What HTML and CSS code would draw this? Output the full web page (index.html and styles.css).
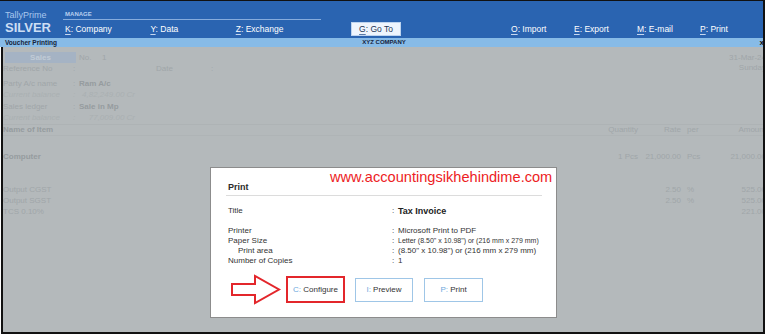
FILE: index.html
```html
<!DOCTYPE html>
<html>
<head>
<meta charset="utf-8">
<title>TallyPrime - Voucher Printing</title>
<link rel="stylesheet" href="styles.css">
</head>
<body>
<div class="app">
  <header class="topbar">
    <div class="brand">
      <div class="brand-name">TallyPrime</div>
      <div class="brand-ed">SILVER</div>
    </div>
    <div class="manage">
      <div class="manage-label">MANAGE</div>
      <div class="manage-items">
        <span class="mi"><span class="key">K</span>: Company</span>
        <span class="mi"><span class="key">Y</span>: Data</span>
        <span class="mi"><span class="key">Z</span>: Exchange</span>
      </div>
    </div>
    <div class="goto"><span class="key">G</span>: Go To</div>
    <div class="right-items">
      <span class="ri"><span class="key">O</span>: Import</span>
      <span class="ri"><span class="key">E</span>: Export</span>
      <span class="ri"><span class="key">M</span>: E-mail</span>
      <span class="ri"><span class="key">P</span>: Print</span>
    </div>
  </header>
  <div class="subbar">
    <span class="sb-left">Voucher Printing</span>
    <span class="sb-center">XYZ COMPANY</span>
    <span class="sb-close">x</span>
  </div>
  <main class="body">
    <div class="sheet">
      <div class="voucher-top">
        <div class="vt-left">
          <div class="row r-sales">
            <span class="sales-tag">Sales</span>
            <span class="no">No.</span>
            <span>1</span>
          </div>
          <div class="row r-ref">
            <span class="lbl">Reference No</span><span class="colon">:</span>
            <span class="ref-gap"></span>
            <span class="date-lbl">Date</span><span class="colon">:</span>
          </div>
          <div class="row r-party">
            <span class="lbl">Party A/c name</span><span class="colon">:</span>
            <span class="bold">Ram A/c</span>
          </div>
          <div class="row r-bal ital">
            <span class="lbl">Current balance</span><span class="colon">:</span>
            <span class="bal">4,82,249.00 Cr</span>
          </div>
          <div class="row r-ledger">
            <span class="lbl">Sales ledger</span><span class="colon">:</span>
            <span class="bold">Sale in Mp</span>
          </div>
          <div class="row r-bal ital">
            <span class="lbl">Current balance</span><span class="colon">:</span>
            <span class="bal">77,009.00 Cr</span>
          </div>
        </div>
        <div class="vt-right">
          <div>31-Mar-24</div>
          <div>Sunday</div>
        </div>
      </div>
      <div class="items-head">
        <span class="bold">Name of Item</span>
        <span class="num">Quantity</span>
        <span class="num">Rate</span>
        <span></span>
        <span>per</span>
        <span class="num">Amount</span>
      </div>
      <div class="item-row r-computer">
        <span class="bold">Computer</span>
        <span class="num">1 Pcs</span>
        <span class="num">21,000.00</span>
        <span></span>
        <span>Pcs</span>
        <span class="num">21,000.00</span>
      </div>
      <div class="item-row tax r-first-tax">
        <span>Output CGST</span>
        <span></span>
        <span class="num">2.50</span>
        <span></span>
        <span>%</span>
        <span class="num">525.00</span>
      </div>
      <div class="item-row tax">
        <span>Output SGST</span>
        <span></span>
        <span class="num">2.50</span>
        <span></span>
        <span>%</span>
        <span class="num">525.00</span>
      </div>
      <div class="item-row tax">
        <span>TCS 0.10%</span>
        <span></span>
        <span></span>
        <span></span>
        <span></span>
        <span class="num">221.00</span>
      </div>
    </div>
  </main>

  <div class="dialog">
    <div class="watermark">www.accountingsikhehindime.com</div>
    <div class="dlg-head">Print</div>
    <div class="kv kv-title">
      <span>Title</span><span>:</span><span class="strong">Tax Invoice</span>
    </div>
    <div class="kv kv-first">
      <span>Printer</span><span>:</span><span>Microsoft Print to PDF</span>
    </div>
    <div class="kv">
      <span>Paper Size</span><span>:</span><span class="small">Letter (8.50" x 10.98") or (216 mm x 279 mm)</span>
    </div>
    <div class="kv">
      <span class="indent">Print area</span><span>:</span><span>(8.50" x 10.98") or (216 mm x 279 mm)</span>
    </div>
    <div class="kv">
      <span>Number of Copies</span><span>:</span><span>1</span>
    </div>
    <div class="btns">
      <svg class="arrow" width="52" height="31" viewBox="0 0 52 31">
        <polygon points="2,10 25,10 25,2 49,15.5 25,29 25,21 2,21" fill="#ffffff" stroke="#e3262b" stroke-width="2" stroke-linejoin="miter"/>
      </svg>
      <div class="btn btn-config"><span class="bkey">C:</span>&nbsp;Configure</div>
      <div class="btn btn-preview"><span class="bkey">I:</span>&nbsp;Preview</div>
      <div class="btn btn-print"><span class="bkey">P:</span>&nbsp;Print</div>
    </div>
  </div>
</div>
</body>
</html>
```

FILE: styles.css
```css
* {
  box-sizing: border-box;
  margin: 0;
  padding: 0;
}

body {
  margin: 0;
  width: 768px;
  height: 336px;
  overflow: hidden;
  background: #ffffff;
  font-family: "Liberation Sans", Arial, sans-serif;
}

.app {
  position: relative;
  width: 765px;
  height: 334px;
  border-top: 1px solid #111111;
  border-right: 2px solid #111111;
  display: flex;
  flex-direction: column;
}

/* ---------- top bar ---------- */
.topbar {
  height: 37px;
  flex: none;
  background: #2a64b1;
  display: flex;
  padding-left: 5px;
  color: #ffffff;
}

.brand {
  width: 63px;
  padding-top: 9px;
}

.brand-name {
  font-size: 9px;
  line-height: 10px;
  color: #a9c7ee;
}

.brand-ed {
  font-size: 13px;
  line-height: 15px;
  font-weight: bold;
  color: #cddef4;
}

.manage {
  width: 258px;
  padding-top: 10px;
}

.manage-label {
  font-size: 6px;
  line-height: 7px;
  font-weight: bold;
  color: #b9d0ef;
  padding-left: 2px;
  padding-bottom: 1px;
  border-bottom: 1px solid #86acdd;
}

.manage-items {
  display: flex;
  margin-top: 4px;
  padding-left: 2px;
}

.mi {
  width: 86px;
  font-size: 8.5px;
  line-height: 10px;
  white-space: nowrap;
}

.key {
  text-decoration: underline;
  text-underline-offset: 2px;
  text-decoration-color: #c6d8f0;
}

.goto {
  align-self: flex-start;
  margin-left: 30px;
  margin-top: 21px;
  width: 54px;
  height: 14px;
  background: #eef5fd;
  border: 1px solid #bdd4ef;
  color: #1f3556;
  font-size: 8.5px;
  line-height: 12px;
  text-align: center;
  white-space: nowrap;
}

.goto .key {
  text-decoration-color: #5a7aa6;
}

.right-items {
  display: flex;
  margin-left: 110px;
  padding-top: 23px;
}

.ri {
  width: 63px;
  font-size: 8.5px;
  line-height: 10px;
  white-space: nowrap;
}

/* ---------- sub bar ---------- */
.subbar {
  height: 9px;
  flex: none;
  background: #87bbe7;
  display: grid;
  grid-template-columns: 1fr auto 1fr;
  padding-left: 5px;
  font-size: 6.5px;
  line-height: 9px;
  font-weight: bold;
  color: #15233a;
}

.sb-center {
  font-size: 6px;
}

.sb-close {
  justify-self: end;
  font-size: 8px;
  margin-right: -1px;
  color: #111111;
}

/* ---------- dimmed voucher ---------- */
.body {
  flex: 1;
  margin-left: 1px;
  border-left: 2px solid #111111;
  border-bottom: 2px solid #111111;
  background: #b4b9bb;
  overflow: hidden;
}

.sheet {
  width: 763px;
  font-size: 8px;
  line-height: 10px;
  color: #a0a6a9;
  white-space: nowrap;
}

.bold {
  font-weight: bold;
  color: #969c9f;
}

.voucher-top {
  display: flex;
}

.vt-left {
  flex: 1;
}

.vt-right {
  text-align: right;
  padding-top: 6px;
  line-height: 10px;
}

.row {
  display: flex;
  height: 10px;
}

.r-sales {
  margin-top: 5px;
  height: 11px;
  align-items: center;
}

.sales-tag {
  margin-left: 2px;
  width: 71px;
  height: 11px;
  line-height: 11px;
  background: #a5b3c4;
  color: #c1cbd6;
  font-weight: bold;
  text-align: center;
}

.no {
  margin-left: 3px;
  width: 23px;
}

.r-ref {
  margin-top: 1px;
}

.lbl {
  width: 70px;
}

.colon {
  width: 6px;
}

.ref-gap {
  width: 77px;
}

.date-lbl {
  width: 55px;
}

.r-party {
  margin-top: 5px;
}

.r-bal {
  margin-top: 1px;
}

.r-ledger {
  margin-top: 2px;
}

.ital {
  font-style: italic;
  color: #aab0b2;
}

.bal {
  width: 56px;
  text-align: right;
}

.items-head,
.item-row {
  display: grid;
  grid-template-columns: 595px 40px 43px 6px 30px 49px;
  height: 10px;
}

.items-head {
  margin-top: 1px;
  height: 12px;
  line-height: 10px;
  border-top: 1px solid #aeb3b5;
  border-bottom: 1px solid #afb4b6;
}

.num {
  text-align: right;
}

.r-computer {
  margin-top: 16px;
}

.tax {
  height: 11px;
  line-height: 11px;
}

.r-first-tax {
  margin-top: 22px;
}

/* ---------- print dialog ---------- */
.dialog {
  position: absolute;
  left: 210px;
  top: 166px;
  width: 347px;
  height: 151px;
  background: #ffffff;
  border: 1px solid #8c8c8c;
  padding: 0 14px 0 15px;
  color: #333333;
}

.watermark {
  position: absolute;
  left: 119px;
  top: 1px;
  font-size: 14.6px;
  line-height: 17px;
  color: #ed1c24;
  white-space: nowrap;
}

.dlg-head {
  height: 28px;
  padding-top: 14px;
  padding-left: 2px;
  font-size: 9px;
  line-height: 10px;
  font-weight: bold;
  color: #2b2b2b;
  border-bottom: 1px solid #dcdcdc;
}

.kv {
  display: grid;
  grid-template-columns: 164px 6px 1fr;
  padding-left: 2px;
  font-size: 8px;
  line-height: 10px;
  height: 10px;
  white-space: nowrap;
}

.kv-title {
  margin-top: 10px;
}

.kv-first {
  margin-top: 10px;
}

.strong {
  font-weight: bold;
  font-size: 9px;
  color: #222222;
}

.small {
  font-size: 7px;
}

.indent {
  padding-left: 10px;
}

.btns {
  display: flex;
  align-items: center;
  margin-top: 8px;
}

.arrow {
  display: block;
  margin-left: 4px;
  flex: none;
}

.btn {
  display: flex;
  align-items: center;
  justify-content: center;
  font-size: 8px;
  color: #333333;
  white-space: nowrap;
  background: #ffffff;
}

.bkey {
  color: #6ea8dc;
}

.btn-config {
  margin-left: 4px;
  width: 59px;
  height: 27px;
  border: 2px solid #e3262b;
}

.btn-preview {
  margin-left: 10px;
  width: 58px;
  height: 24px;
  border: 1.5px solid #9fc6e7;
}

.btn-print {
  margin-left: 11px;
  width: 59px;
  height: 24px;
  border: 1.5px solid #9fc6e7;
}
```
